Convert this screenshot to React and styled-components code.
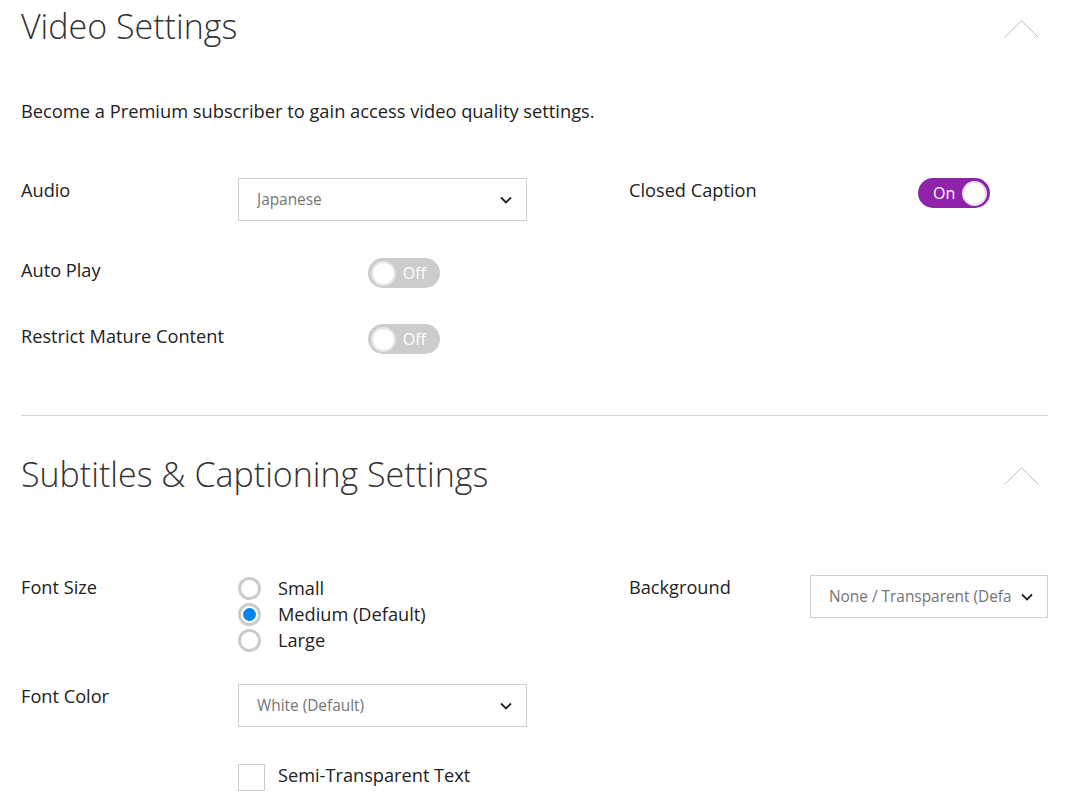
import React from "react";
import styled, { createGlobalStyle } from "styled-components";

const Global = createGlobalStyle`
  html, body { margin: 0; padding: 0; background: #fff; }
  body { font-family: "Open Sans", "Noto Sans", Arial, sans-serif; color: #222; }
  * { box-sizing: border-box; }
`;

const Page = styled.div`
  padding: 0 38px 0 21px;
`;

const Section = styled.section`
  padding-top: ${(p) => p.$top}px;
  padding-bottom: ${(p) => p.$bottom}px;
  border-bottom: ${(p) => (p.$divider ? "1px solid #d5d5d5" : "none")};
`;

const Header = styled.div`
  display: flex;
  justify-content: space-between;
  align-items: flex-start;
`;

const Title = styled.h2`
  margin: 0;
  font-size: 34px;
  line-height: 46px;
  font-weight: 300;
  color: #333;
`;

const Collapse = styled.svg`
  margin-top: ${(p) => p.$offset}px;
  margin-right: 9px;
  width: 35px;
  height: 18px;
`;

const Note = styled.p`
  margin: 50px 0 0;
  font-size: 18.3px;
  line-height: 24px;
  color: #222;
`;

const Columns = styled.div`
  display: grid;
  grid-template-columns: 608px 1fr;
  margin-top: ${(p) => p.$top}px;
`;

const Column = styled.div`
  display: flex;
  flex-direction: column;
`;

const Row = styled.div`
  display: flex;
  align-items: flex-start;
  margin-bottom: ${(p) => p.$gap ?? 0}px;
`;

const Label = styled.div`
  width: ${(p) => p.$w}px;
  flex: none;
  font-size: 18.2px;
  line-height: 24px;
  color: #222;
`;

const SelectBox = styled.div`
  width: ${(p) => p.$w}px;
  height: 43px;
  border: 1px solid #cfcfcf;
  display: flex;
  align-items: center;
  padding: 0 14px 0 18px;
  gap: 10px;
`;

const SelectText = styled.span`
  flex: 1;
  min-width: 0;
  overflow: hidden;
  white-space: nowrap;
  font-size: 15.4px;
  color: #757575;
`;

const Chevron = styled.svg`
  width: 12px;
  height: 8px;
  flex: none;
  margin-top: 1px;
`;

const Switch = styled.div`
  width: 72px;
  height: 30px;
  border-radius: 15px;
  background: ${(p) => (p.$on ? "#8f24aa" : "#cccccc")};
  display: flex;
  align-items: center;
  flex-direction: ${(p) => (p.$on ? "row" : "row-reverse")};
  justify-content: space-between;
  padding-left: ${(p) => (p.$on ? 15 : 3)}px;
  padding-right: ${(p) => (p.$on ? 3 : 14)}px;
  font-size: 16px;
  color: #fff;
`;

const Knob = styled.span`
  width: 25px;
  height: 25px;
  border-radius: 50%;
  background: #fff;
  border: 2px solid ${(p) => (p.$on ? "#e8e0ea" : "#e6e6e6")};
`;

const RadioList = styled.div`
  display: flex;
  flex-direction: column;
`;

const RadioItem = styled.label`
  display: flex;
  align-items: center;
  height: 26px;
  font-size: 18.2px;
  color: #222;
  gap: 17px;
`;

const RadioCircle = styled.span`
  width: 23px;
  height: 23px;
  border-radius: 50%;
  border: 3px solid #cccccc;
  display: flex;
  align-items: center;
  justify-content: center;
  flex: none;
  &::after {
    content: "";
    width: 13px;
    height: 13px;
    border-radius: 50%;
    background: ${(p) => (p.$checked ? "#0a84e6" : "transparent")};
  }
`;

const CheckItem = styled.label`
  display: flex;
  align-items: flex-start;
  gap: 13px;
  font-size: 18.2px;
  line-height: 24px;
  color: #222;
  margin-left: 217px;
`;

const CheckSquare = styled.span`
  width: 27px;
  height: 27px;
  border: 1px solid #cccccc;
  flex: none;
`;

const CheckText = styled.span`
  margin-top: -1px;
`;

const ChevronDown = () => (
  <Chevron viewBox="0 0 12 8">
    <polyline points="1,1.5 6,6.5 11,1.5" fill="none" stroke="#222" strokeWidth="1.8" />
  </Chevron>
);

const Select = ({ w, value }) => (
  <SelectBox $w={w}>
    <SelectText>{value}</SelectText>
    <ChevronDown />
  </SelectBox>
);

const Toggle = ({ on }) => (
  <Switch $on={on}>
    <span>{on ? "On" : "Off"}</span>
    <Knob $on={on} />
  </Switch>
);

const CollapseIcon = ({ offset }) => (
  <Collapse $offset={offset} viewBox="0 0 35 18">
    <polyline points="0.5,17.5 17.5,0.7 34.5,17.5" fill="none" stroke="#bdbdbd" strokeWidth="1" />
  </Collapse>
);

export default function App() {
  return (
    <Page>
      <Global />
      <Section $top={3} $bottom={61} $divider>
        <Header>
          <Title>Video Settings</Title>
          <CollapseIcon offset={17} />
        </Header>
        <Note>Become a Premium subscriber to gain access video quality settings.</Note>
        <Columns $top={55}>
          <Column>
            <Row $gap={37}>
              <Label $w={217}>Audio</Label>
              <Select w={289} value="Japanese" />
            </Row>
            <Row $gap={36}>
              <Label $w={347}>Auto Play</Label>
              <Toggle on={false} />
            </Row>
            <Row>
              <Label $w={347}>Restrict Mature Content</Label>
              <Toggle on={false} />
            </Row>
          </Column>
          <Column>
            <Row>
              <Label $w={289}>Closed Caption</Label>
              <Toggle on />
            </Row>
          </Column>
        </Columns>
      </Section>
      <Section $top={35} $bottom={20}>
        <Header>
          <Title>Subtitles &amp; Captioning Settings</Title>
          <CollapseIcon offset={16} />
        </Header>
        <Columns $top={78}>
          <Column>
            <Row $gap={31}>
              <Label $w={217}>Font Size</Label>
              <RadioList>
                <RadioItem>
                  <RadioCircle />
                  Small
                </RadioItem>
                <RadioItem>
                  <RadioCircle $checked />
                  Medium (Default)
                </RadioItem>
                <RadioItem>
                  <RadioCircle />
                  Large
                </RadioItem>
              </RadioList>
            </Row>
            <Row $gap={37}>
              <Label $w={217}>Font Color</Label>
              <Select w={289} value="White (Default)" />
            </Row>
            <CheckItem>
              <CheckSquare />
              <CheckText>Semi-Transparent Text</CheckText>
            </CheckItem>
          </Column>
          <Column>
            <Row>
              <Label $w={181}>Background</Label>
              <Select w={238} value="None / Transparent (Default)" />
            </Row>
          </Column>
        </Columns>
      </Section>
    </Page>
  );
}
